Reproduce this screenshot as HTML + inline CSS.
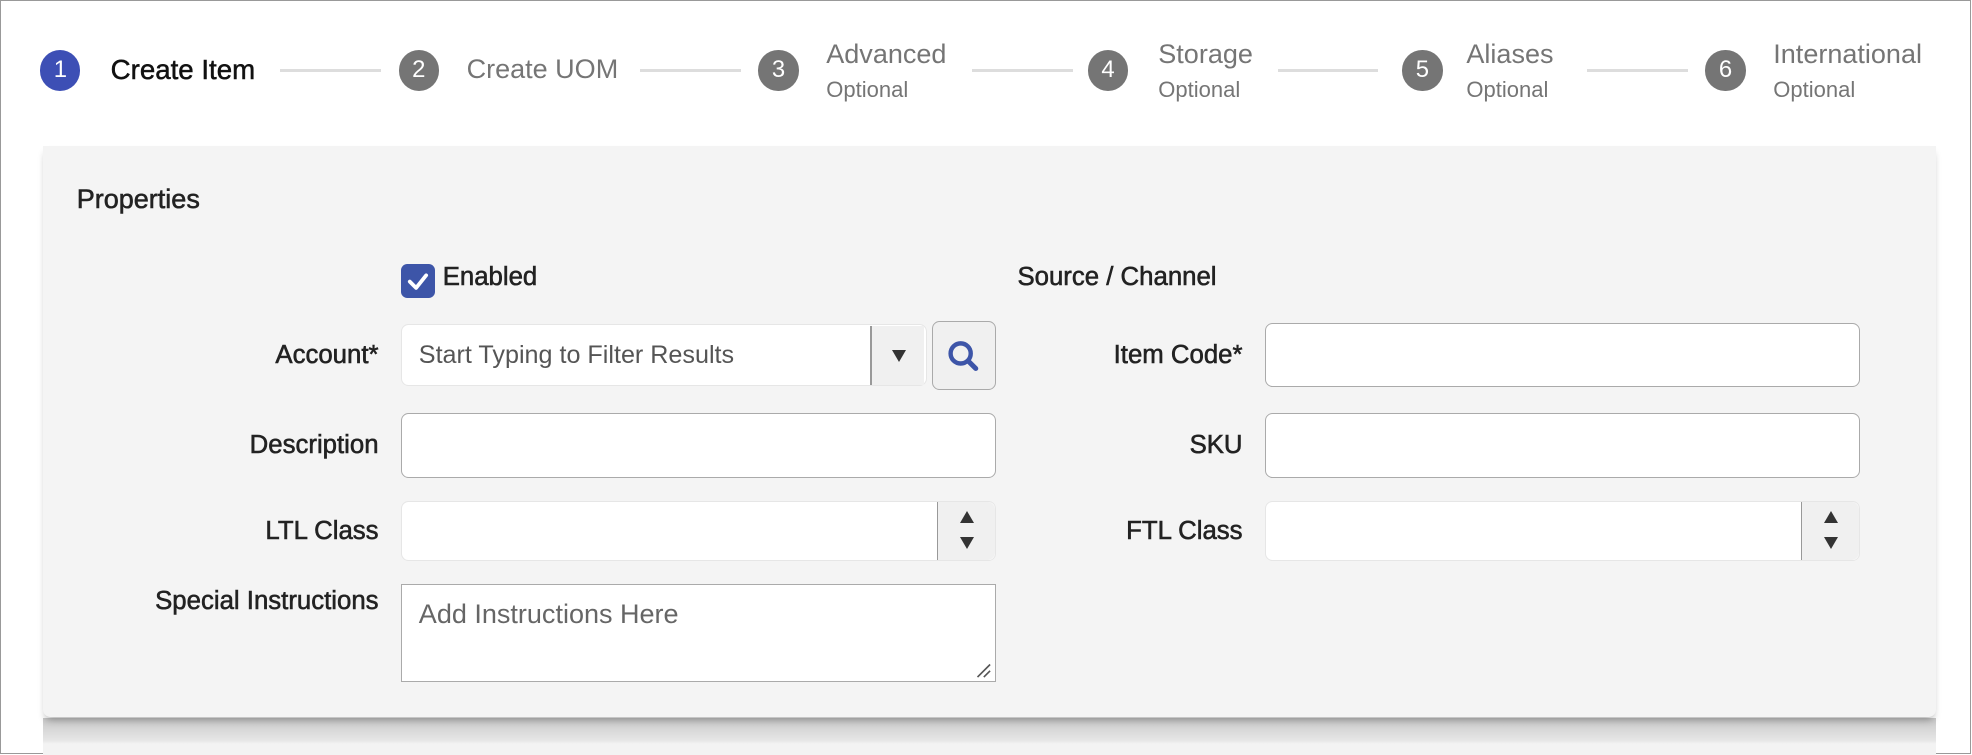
<!DOCTYPE html>
<html><head><meta charset="utf-8"><style>
html,body{margin:0;padding:0;background:#fff;}
body{width:1972px;height:754px;overflow:hidden;}
#s{position:relative;width:1568px;height:600px;zoom:1.25765;font-family:"Liberation Sans",sans-serif;}
.a{position:absolute;}
.frame{left:0;top:0;width:1566px;height:598px;border:1px solid #999;}
.c{width:32px;height:32px;border-radius:50%;background:#757575;color:#fff;font-size:19px;text-align:center;line-height:32px;top:40px;}
.t{color:#757575;font-size:21.5px;}
.o{color:#757575;font-size:17.5px;}
.ln{height:2px;background:#ddd;top:55px;}
.lbl{color:#222;font-size:20.5px;-webkit-text-stroke:0.45px #222;text-align:right;}
.inp{background:#fff;border:1.5px solid #aaa;border-radius:6px;box-sizing:border-box;}
.inp2{background:#fff;border:1px solid #e6e6e6;border-radius:6px;box-sizing:border-box;}
.tri{width:0;height:0;border-left:6px solid transparent;border-right:6px solid transparent;}
</style></head><body><div id="s">
<div class="a frame"></div>
<div class="a c" style="left:32px;background:#3d4fb5">1</div>
<div class="a" style="left:88px;top:43px;font-size:22px;color:#111;-webkit-text-stroke:0.4px #111">Create Item</div>
<div class="a ln" style="left:223px;width:80px"></div>
<div class="a c" style="left:317px">2</div>
<div class="a t" style="left:371px;top:43px">Create UOM</div>
<div class="a ln" style="left:509px;width:80px"></div>
<div class="a c" style="left:603px">3</div>
<div class="a t" style="left:657px;top:31px">Advanced</div>
<div class="a o" style="left:657px;top:61px">Optional</div>
<div class="a ln" style="left:773px;width:80px"></div>
<div class="a c" style="left:865px">4</div>
<div class="a t" style="left:921px;top:31px">Storage</div>
<div class="a o" style="left:921px;top:61px">Optional</div>
<div class="a ln" style="left:1016px;width:80px"></div>
<div class="a c" style="left:1115px">5</div>
<div class="a t" style="left:1166px;top:31px">Aliases</div>
<div class="a o" style="left:1166px;top:61px">Optional</div>
<div class="a ln" style="left:1262px;width:80px"></div>
<div class="a c" style="left:1356px">6</div>
<div class="a t" style="left:1410px;top:31px">International</div>
<div class="a o" style="left:1410px;top:61px">Optional</div>

<div class="a" style="left:34px;top:571px;width:1505px;height:29px;background:linear-gradient(#c8c8c8,#e6e6e6 60%,#f3f3f3 70%)"></div>
<div class="a" style="left:34px;top:116px;width:1505px;height:454px;background:#f4f4f4;border-radius:0 0 6px 6px;box-shadow:0 4px 6px -2px rgba(0,0,0,0.3)"></div>

<div class="a" style="left:61px;top:146px;font-size:21.5px;color:#222;-webkit-text-stroke:0.45px #222">Properties</div>
<div class="a" style="left:319px;top:210px;width:27px;height:27px;border-radius:5px;background:#3d55a8"><svg width="27" height="27"><path d="M7 14 L12 19 L20 9" stroke="#fff" stroke-width="3" fill="none" stroke-linecap="round" stroke-linejoin="round"/></svg></div>
<div class="a lbl" style="left:352px;top:209px">Enabled</div>
<div class="a lbl" style="left:809px;top:209px">Source / Channel</div>

<div class="a lbl" style="left:0;width:301px;top:271px">Account*</div>
<div class="a inp2" style="left:319px;top:258px;height:49px;width:418px"></div>
<div class="a" style="left:692px;top:259px;width:1px;height:47px;background:#999"></div>
<div class="a" style="left:693px;top:259px;width:42px;height:47px;background:#f0f0f0"></div>
<div class="a tri" style="left:709px;top:278px;border-top:10px solid #333"></div>
<div class="a" style="left:333px;top:271px;font-size:20px;color:#555">Start Typing to Filter Results</div>
<div class="a" style="left:741px;top:255px;width:51px;height:55px;box-sizing:border-box;border:1.5px solid #aaa;border-radius:6px;background:#f0f0f0"><svg width="48" height="52"><circle cx="22" cy="25" r="8" stroke="#3d55a8" stroke-width="3.5" fill="none"/><path d="M28 31 L34 37" stroke="#3d55a8" stroke-width="4" stroke-linecap="round"/></svg></div>

<div class="a lbl" style="left:0;width:301px;top:343px">Description</div>
<div class="a inp" style="left:319px;top:328px;width:473px;height:52px"></div>
<div class="a lbl" style="left:0;width:301px;top:411px">LTL Class</div>
<div class="a inp2" style="left:319px;top:398px;width:473px;height:48px"></div>
<div class="a" style="left:745px;top:399px;width:1px;height:46px;background:#999"></div>
<div class="a" style="left:746px;top:399px;width:45px;height:46px;background:#f0f0f0;border-radius:0 6px 6px 0"></div>
<div class="a tri" style="left:763px;top:406px;border-bottom:10px solid #333"></div>
<div class="a tri" style="left:763px;top:427px;border-top:10px solid #333"></div>
<div class="a lbl" style="left:0;width:301px;top:467px">Special Instructions</div>
<div class="a" style="left:319px;top:464px;width:473px;height:78px;box-sizing:border-box;border:1.5px solid #aaa;background:#fff"></div>
<div class="a" style="left:333px;top:476px;font-size:21.5px;color:#666">Add Instructions Here</div>
<svg class="a" style="left:775px;top:526px" width="14" height="14"><path d="M2 12 L12 2 M7 12 L12 7" stroke="#555" stroke-width="1.3"/></svg>

<div class="a lbl" style="left:700px;width:288px;top:271px">Item Code*</div>
<div class="a inp" style="left:1006px;top:257px;width:473px;height:51px"></div>
<div class="a lbl" style="left:700px;width:288px;top:343px">SKU</div>
<div class="a inp" style="left:1006px;top:328px;width:473px;height:52px"></div>
<div class="a lbl" style="left:700px;width:288px;top:411px">FTL Class</div>
<div class="a inp2" style="left:1006px;top:398px;width:473px;height:48px"></div>
<div class="a" style="left:1432px;top:399px;width:1px;height:46px;background:#999"></div>
<div class="a" style="left:1433px;top:399px;width:45px;height:46px;background:#f0f0f0;border-radius:0 6px 6px 0"></div>
<div class="a tri" style="left:1450px;top:406px;border-bottom:10px solid #333"></div>
<div class="a tri" style="left:1450px;top:427px;border-top:10px solid #333"></div>
</div></body></html>
